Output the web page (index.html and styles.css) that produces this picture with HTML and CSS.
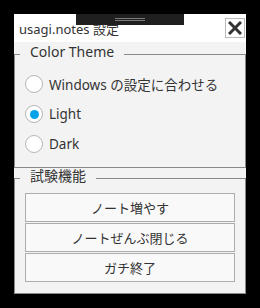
FILE: index.html
```html
<!DOCTYPE html>
<html lang="ja">
<head>
<meta charset="utf-8">
<title>usagi.notes 設定</title>
<link rel="stylesheet" href="styles.css">
</head>
<body>
<div class="window">
  <header class="titlebar">
    <span class="title">usagi.notes 設定</span>
    <button class="close" aria-label="閉じる">
      <svg width="14" height="14" viewBox="0 0 14 14"><path d="M1 1 L13 13 M13 1 L1 13" stroke="#333" stroke-width="3" fill="none"/></svg>
    </button>
    <div class="grip"><span></span><span></span></div>
  </header>
  <main class="content">
    <fieldset class="group">
      <legend class="group-title">Color Theme</legend>
      <div class="options">
        <label class="radio"><span class="dot"></span>Windows の設定に合わせる</label>
        <label class="radio"><span class="dot checked"></span>Light</label>
        <label class="radio"><span class="dot"></span>Dark</label>
      </div>
    </fieldset>
    <fieldset class="group group-exp">
      <legend class="group-title">試験機能</legend>
      <div class="actions">
        <button class="action">ノート増やす</button>
        <button class="action">ノートぜんぶ閉じる</button>
        <button class="action">ガチ終了</button>
      </div>
    </fieldset>
  </main>
</div>
</body>
</html>
```
FILE: styles.css
```css
body {
  margin: 0;
  background: #000;
  font-family: "Noto Sans", "Noto Sans CJK JP", sans-serif;
  color: #333;
}
.window {
  margin: 14px 0 0 14px;
  width: 232px;
  background: #f3f3f3;
}
.titlebar {
  position: relative;
  height: 28px;
  background: #fff;
  display: flex;
  align-items: center;
  justify-content: space-between;
  padding: 0 1px 0 5px;
  box-sizing: border-box;
}
.title {
  font-size: 13px;
  line-height: 18px;
  margin-top: 2px;
  color: #333;
}
.close {
  width: 20px;
  height: 20px;
  padding: 0;
  border: 1px solid #b9b9b9;
  background: #fff;
  display: flex;
  align-items: center;
  justify-content: center;
  box-sizing: border-box;
}
.grip {
  position: absolute;
  left: 62px;
  top: 0;
  width: 108px;
  height: 11px;
  background: #1f1f1f;
  display: flex;
  flex-direction: column;
  align-items: center;
  gap: 1px;
  padding-top: 4px;
  box-sizing: border-box;
}
.grip span {
  width: 30px;
  height: 1px;
  background: #7a7a7a;
}
.group {
  margin: 0;
  padding: 0;
  border: 1px solid #8a8a8a;
  min-width: 0;
}
.group-exp {
  margin-top: -2px;
}
.group-title {
  margin-left: 5px;
  padding: 0 10px 4px;
  font-size: 14px;
  line-height: 20px;
  color: #333;
}
.options {
  padding: 3px 10px 8px;
}
.radio {
  display: flex;
  align-items: center;
  gap: 6px;
  height: 30px;
  font-size: 13.5px;
  white-space: nowrap;
}
.dot {
  flex: none;
  width: 18px;
  height: 18px;
  border: 1px solid #b5b5b5;
  border-radius: 50%;
  background: #fff;
  box-sizing: border-box;
  display: flex;
  align-items: center;
  justify-content: center;
}
.dot.checked::after {
  content: "";
  width: 9px;
  height: 9px;
  border-radius: 50%;
  background: #00a2e8;
}
.actions {
  display: flex;
  flex-direction: column;
  gap: 1px;
  padding: 3px 10px 11px;
}
.action {
  height: 29px;
  padding: 0;
  border: 1px solid #adadad;
  background: #f9f9f9;
  font-family: inherit;
  font-size: 13px;
  color: #333;
}
```
